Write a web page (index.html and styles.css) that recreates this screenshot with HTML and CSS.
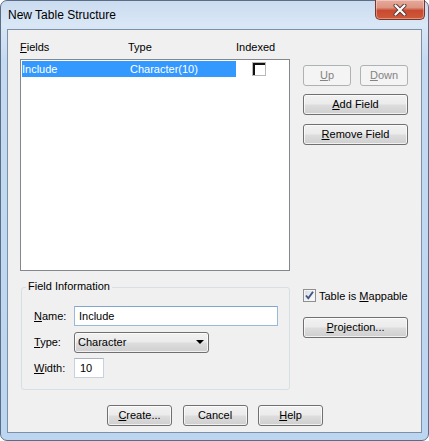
FILE: index.html
```html
<!DOCTYPE html>
<html>
<head>
<meta charset="utf-8">
<title>New Table Structure</title>
<link rel="stylesheet" href="styles.css">
</head>
<body>
<div class="window">
  <div class="titlebar"><span class="title">New Table Structure</span></div>
  <div class="close">
    <svg width="14" height="12" viewBox="0 0 14 12">
      <path d="M2.5 1.5 L11.5 10.5 M11.5 1.5 L2.5 10.5" stroke="#5a3a34" stroke-width="4" stroke-linecap="round"/>
      <path d="M2.5 1.5 L11.5 10.5 M11.5 1.5 L2.5 10.5" stroke="#ffffff" stroke-width="2.2" stroke-linecap="round"/>
    </svg>
  </div>
  <div class="client">
    <div class="top">
      <div class="listcol">
        <div class="headers">
          <span><u>F</u>ields</span>
          <span>Type</span>
          <span>Indexed</span>
        </div>
        <div class="list">
          <div class="row">
            <div class="sel">
              <span class="c1">Include</span>
              <span class="c2">Character(10)</span>
            </div>
            <span class="cb"></span>
          </div>
        </div>
      </div>
      <div class="rightcol">
        <div class="updown">
          <div class="btn disabled w48"><u>U</u>p</div>
          <div class="btn disabled w48"><u>D</u>own</div>
        </div>
        <div class="btn full add"><u>A</u>dd Field</div>
        <div class="btn full remove"><u>R</u>emove Field</div>
      </div>
    </div>
    <div class="middle">
      <div class="group">
        <span class="legend">Field Information</span>
        <div class="frow">
          <span class="flabel"><u>N</u>ame:</span>
          <div class="input name">Include</div>
        </div>
        <div class="frow">
          <span class="flabel"><u>T</u>ype:</span>
          <div class="combo"><span>Character</span><span class="arrow"></span></div>
        </div>
        <div class="frow">
          <span class="flabel"><u>W</u>idth:</span>
          <div class="input width">10</div>
        </div>
      </div>
      <div class="rightcol2">
        <div class="check">
          <span class="box">
            <svg width="11" height="11" viewBox="0 0 11 11">
              <path d="M2 5.5 L4.3 8.3 L9 1.8" fill="none" stroke="#3f5489" stroke-width="1.9"/>
            </svg>
          </span>
          <span>Table is <u>M</u>appable</span>
        </div>
        <div class="btn full proj"><u>P</u>rojection...</div>
      </div>
    </div>
    <div class="bottom">
      <div class="btn bb"><u>C</u>reate...</div>
      <div class="btn bb">Cancel</div>
      <div class="btn bb"><u>H</u>elp</div>
    </div>
  </div>
</div>
</body>
</html>
```
FILE: styles.css
```css
html, body {
  margin: 0;
  padding: 0;
  background: #ffffff;
}
body {
  font-family: "Liberation Sans", Arial, sans-serif;
  font-size: 11px;
  color: #000;
}
.window {
  position: relative;
  width: 429px;
  height: 441px;
  box-sizing: border-box;
  border: 1px solid #5b6d85;
  border-radius: 7px;
  padding: 0 6px 7px 6px;
  background: linear-gradient(to bottom, #cbdcf0 0px, #d9e7f6 24px, #c4daf2 60px, #bcd5f0 100%);
  display: flex;
  flex-direction: column;
}
.titlebar {
  height: 28px;
  display: flex;
  align-items: center;
  padding-left: 1px;
}
.title {
  font-size: 12px;
  color: #000;
}
.close {
  position: absolute;
  top: -1px;
  right: 3px;
  width: 48px;
  height: 19px;
  border: 1px solid #7b3526;
  border-top: none;
  border-radius: 0 0 5px 5px;
  background: linear-gradient(to bottom, #e8aa9c 0%, #dc9483 40%, #c84a30 55%, #cf5a3a 100%);
  display: flex;
  align-items: center;
  justify-content: center;
  box-shadow: inset 0 0 0 1px rgba(255,255,255,0.35);
}
.client {
  height: 404px;
  box-sizing: border-box;
  border: 1px solid #7f90a6;
  background: #f0f0f0;
  display: flex;
  flex-direction: column;
}
u { text-decoration: underline; text-underline-offset: 1px; }

.top {
  display: flex;
  gap: 13px;
  padding: 11px 0 0 12px;
}
.listcol { width: 270px; }
.headers {
  height: 18px;
  line-height: 13px;
  display: grid;
  grid-template-columns: 108px 108px 1fr;
}
.list {
  height: 212px;
  box-sizing: border-box;
  border: 1px solid #828790;
  background: #fff;
  padding: 1px;
}
.row {
  display: flex;
  align-items: flex-start;
}
.sel {
  width: 214px;
  height: 16px;
  background: #3399ff;
  color: #fff;
  line-height: 16px;
  display: flex;
}
.c1 { width: 108px; }
.cb {
  width: 14px;
  height: 14px;
  box-sizing: border-box;
  margin-left: 16px;
  margin-top: 1px;
  background: #fff;
  border: 1px solid #b8b8b8;
  box-shadow: inset 2px 2px 0 #111;
}
.rightcol {
  width: 105px;
  padding-top: 24px;
  display: flex;
  flex-direction: column;
}
.updown {
  display: flex;
  gap: 9px;
}
.btn {
  height: 21px;
  box-sizing: border-box;
  border: 1px solid #707070;
  border-radius: 3px;
  background: linear-gradient(to bottom, #f2f2f2 0%, #ebebeb 48%, #dddddd 52%, #cfcfcf 100%);
  box-shadow: inset 0 0 0 1px rgba(255,255,255,0.7);
  display: flex;
  align-items: center;
  justify-content: center;
  line-height: 13px;
}
.btn.disabled {
  border-color: #adb2b5;
  background: #f4f4f4;
  color: #838383;
  box-shadow: none;
}
.w48 { width: 48px; }
.full { width: 105px; }
.add { margin-top: 8px; }
.remove { margin-top: 9px; }

.middle {
  display: flex;
  gap: 13px;
  padding: 16px 0 0 13px;
}
.group {
  position: relative;
  width: 269px;
  height: 103px;
  box-sizing: border-box;
  border: 1px solid #d5dfe5;
  border-radius: 3px;
  padding: 18px 0 0 12px;
  display: flex;
  flex-direction: column;
  gap: 6px;
}
.legend {
  position: absolute;
  top: -8px;
  left: 4px;
  padding: 0 2px;
  background: #f0f0f0;
  line-height: 13px;
}
.frow {
  display: flex;
  align-items: center;
  height: 20px;
}
.flabel { width: 40px; }
.input {
  height: 20px;
  box-sizing: border-box;
  background: #fff;
  border: 1px solid #c8d2dc;
  border-top-color: #abb5c2;
  line-height: 18px;
  padding-left: 4px;
}
.input.name {
  width: 204px;
  border-color: #9ab8d8;
  border-top-color: #7fa6cf;
}
.input.width {
  width: 30px;
  padding-left: 5px;
}
.combo {
  width: 135px;
  height: 21px;
  box-sizing: border-box;
  border: 1px solid #707070;
  border-radius: 3px;
  background: linear-gradient(to bottom, #f2f2f2 0%, #ebebeb 48%, #dddddd 52%, #cfcfcf 100%);
  box-shadow: inset 0 0 0 1px rgba(255,255,255,0.7);
  display: flex;
  align-items: center;
  justify-content: space-between;
  padding: 0 3px 0 3px;
}
.arrow {
  width: 0;
  height: 0;
  border-left: 4px solid transparent;
  border-right: 4px solid transparent;
  border-top: 4px solid #000;
  margin-right: 1px;
}
.rightcol2 {
  width: 105px;
  padding-top: 2px;
  display: flex;
  flex-direction: column;
}
.check {
  display: flex;
  align-items: center;
  height: 13px;
  gap: 3px;
}
.box {
  width: 13px;
  height: 13px;
  box-sizing: border-box;
  border: 1px solid #8e8f8f;
  background: linear-gradient(135deg, #d5d9de 0%, #f4f4f4 70%, #ffffff 100%);
  box-shadow: inset 0 0 0 1px #f4f4f4;
  display: flex;
  align-items: center;
  justify-content: center;
}
.box svg { display: block; }
.proj { margin-top: 15px; }

.bottom {
  display: flex;
  gap: 10.5px;
  padding: 15px 0 0 99px;
}
.bb { width: 65px; }
```
